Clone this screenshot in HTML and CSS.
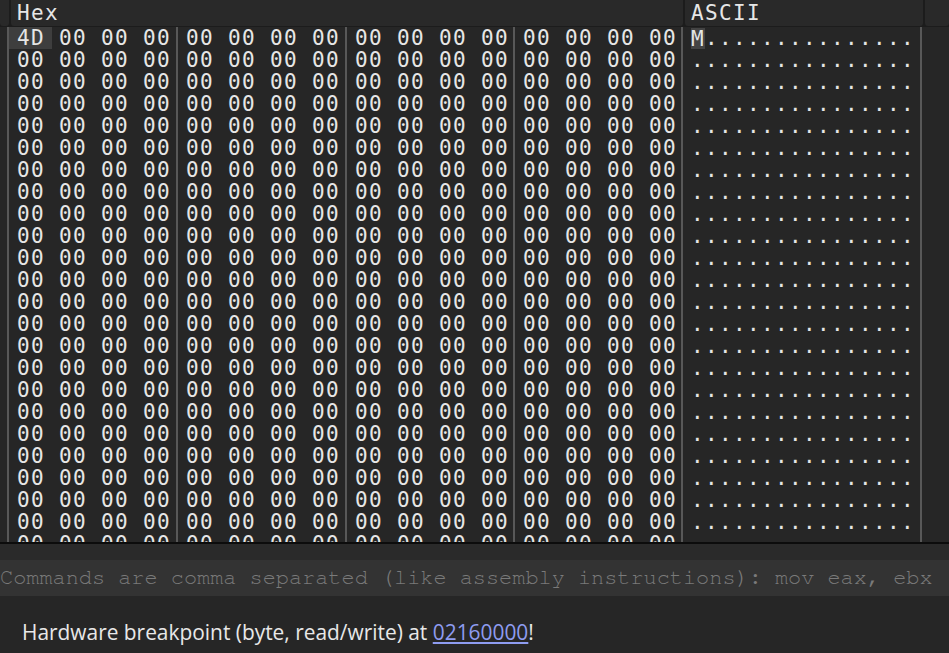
FILE: index.html
```html
<!DOCTYPE html>
<html>
<head>
<meta charset="utf-8">
<link rel="stylesheet" href="styles.css">
</head>
<body>
<div class="dump">
  <div class="head">
    <div class="hc hc-pad"></div>
    <div class="hc hc-hex">Hex</div>
    <div class="hc hc-asc">ASCII</div>
    <div class="hc hc-end"></div>
  </div>
  <div class="rows">
    <div class="row"><span class="g"><span class="sel">4D</span> 00 00 00</span><span class="g">00 00 00 00</span><span class="g">00 00 00 00</span><span class="g">00 00 00 00</span><span class="a"><span class="selc">M</span>...............</span></div>
    <div class="row"><span class="g">00 00 00 00</span><span class="g">00 00 00 00</span><span class="g">00 00 00 00</span><span class="g">00 00 00 00</span><span class="a">................</span></div>
    <div class="row"><span class="g">00 00 00 00</span><span class="g">00 00 00 00</span><span class="g">00 00 00 00</span><span class="g">00 00 00 00</span><span class="a">................</span></div>
    <div class="row"><span class="g">00 00 00 00</span><span class="g">00 00 00 00</span><span class="g">00 00 00 00</span><span class="g">00 00 00 00</span><span class="a">................</span></div>
    <div class="row"><span class="g">00 00 00 00</span><span class="g">00 00 00 00</span><span class="g">00 00 00 00</span><span class="g">00 00 00 00</span><span class="a">................</span></div>
    <div class="row"><span class="g">00 00 00 00</span><span class="g">00 00 00 00</span><span class="g">00 00 00 00</span><span class="g">00 00 00 00</span><span class="a">................</span></div>
    <div class="row"><span class="g">00 00 00 00</span><span class="g">00 00 00 00</span><span class="g">00 00 00 00</span><span class="g">00 00 00 00</span><span class="a">................</span></div>
    <div class="row"><span class="g">00 00 00 00</span><span class="g">00 00 00 00</span><span class="g">00 00 00 00</span><span class="g">00 00 00 00</span><span class="a">................</span></div>
    <div class="row"><span class="g">00 00 00 00</span><span class="g">00 00 00 00</span><span class="g">00 00 00 00</span><span class="g">00 00 00 00</span><span class="a">................</span></div>
    <div class="row"><span class="g">00 00 00 00</span><span class="g">00 00 00 00</span><span class="g">00 00 00 00</span><span class="g">00 00 00 00</span><span class="a">................</span></div>
    <div class="row"><span class="g">00 00 00 00</span><span class="g">00 00 00 00</span><span class="g">00 00 00 00</span><span class="g">00 00 00 00</span><span class="a">................</span></div>
    <div class="row"><span class="g">00 00 00 00</span><span class="g">00 00 00 00</span><span class="g">00 00 00 00</span><span class="g">00 00 00 00</span><span class="a">................</span></div>
    <div class="row"><span class="g">00 00 00 00</span><span class="g">00 00 00 00</span><span class="g">00 00 00 00</span><span class="g">00 00 00 00</span><span class="a">................</span></div>
    <div class="row"><span class="g">00 00 00 00</span><span class="g">00 00 00 00</span><span class="g">00 00 00 00</span><span class="g">00 00 00 00</span><span class="a">................</span></div>
    <div class="row"><span class="g">00 00 00 00</span><span class="g">00 00 00 00</span><span class="g">00 00 00 00</span><span class="g">00 00 00 00</span><span class="a">................</span></div>
    <div class="row"><span class="g">00 00 00 00</span><span class="g">00 00 00 00</span><span class="g">00 00 00 00</span><span class="g">00 00 00 00</span><span class="a">................</span></div>
    <div class="row"><span class="g">00 00 00 00</span><span class="g">00 00 00 00</span><span class="g">00 00 00 00</span><span class="g">00 00 00 00</span><span class="a">................</span></div>
    <div class="row"><span class="g">00 00 00 00</span><span class="g">00 00 00 00</span><span class="g">00 00 00 00</span><span class="g">00 00 00 00</span><span class="a">................</span></div>
    <div class="row"><span class="g">00 00 00 00</span><span class="g">00 00 00 00</span><span class="g">00 00 00 00</span><span class="g">00 00 00 00</span><span class="a">................</span></div>
    <div class="row"><span class="g">00 00 00 00</span><span class="g">00 00 00 00</span><span class="g">00 00 00 00</span><span class="g">00 00 00 00</span><span class="a">................</span></div>
    <div class="row"><span class="g">00 00 00 00</span><span class="g">00 00 00 00</span><span class="g">00 00 00 00</span><span class="g">00 00 00 00</span><span class="a">................</span></div>
    <div class="row"><span class="g">00 00 00 00</span><span class="g">00 00 00 00</span><span class="g">00 00 00 00</span><span class="g">00 00 00 00</span><span class="a">................</span></div>
    <div class="row"><span class="g">00 00 00 00</span><span class="g">00 00 00 00</span><span class="g">00 00 00 00</span><span class="g">00 00 00 00</span><span class="a">................</span></div>
    <div class="row"><span class="g">00 00 00 00</span><span class="g">00 00 00 00</span><span class="g">00 00 00 00</span><span class="g">00 00 00 00</span><span class="a">................</span></div>
  </div>
</div>
<div class="cmdbar">
  <input class="cmd" type="text" placeholder="Commands are comma separated (like assembly instructions): mov eax, ebx">
</div>
<div class="msg">Hardware breakpoint (byte, read/write) at <a class="addr" href="#">02160000</a>!</div>
</body>
</html>
```
FILE: styles.css
```css
html, body {
  margin: 0;
  padding: 0;
}
body {
  width: 949px;
  height: 653px;
  overflow: hidden;
  background: #262626;
  color: #e6e6e6;
}
.dump {
  height: 544px;
  box-sizing: border-box;
  border-bottom: 2px solid #0c0c0c;
  overflow: hidden;
  font-family: "DejaVu Sans Mono", monospace;
  font-size: 21px;
  letter-spacing: 1.36px;
}
.head {
  display: flex;
  gap: 2px;
  height: 27px;
  box-sizing: border-box;
  border-bottom: 1px solid #1c1c1c;
  background: #1c1c1c;
}
.hc {
  background: #292929;
  line-height: 26px;
  padding-left: 6px;
  color: #e6e6e6;
  border-radius: 0 0 3px 3px;
  box-sizing: border-box;
}
.hc-pad { width: 9px; padding: 0; }
.hc-hex { width: 672px; }
.hc-asc { width: 238px; }
.hc-end { flex: 1; padding: 0; }
.rows {
  padding-left: 7px;
}
.row {
  display: flex;
  height: 22px;
  line-height: 22px;
  white-space: pre;
}
.g {
  width: 168px;
  box-sizing: border-box;
  border-left: 2px solid #585858;
  padding-left: 8px;
}
.g:nth-child(-n+2) { width: 169px; }
.a {
  width: 241px;
  box-sizing: border-box;
  border-left: 2px solid #585858;
  border-right: 2px solid #585858;
  padding-left: 8px;
}
.sel {
  display: inline-block;
  background: #3e3e3e;
  padding: 0 7px 0 8px;
  margin: 0 -7px 0 -8px;
}
.selc {
  display: inline-block;
  background: #444444;
  height: 21px;
  vertical-align: top;
  margin-top: 1px;
}
.cmdbar {
  padding-top: 16px;
  background: #2a2a2a;
}
.cmd {
  display: block;
  width: 100%;
  height: 36px;
  box-sizing: border-box;
  margin: 0;
  padding: 0 0 2px 0;
  border: 0;
  outline: none;
  background: #333333;
  color: #d0d0d0;
  font-family: "Nimbus Mono PS", "Nimbus Mono L", "FreeMono", "Courier New", "Liberation Mono", monospace;
  font-size: 21.9px;
}
.cmd::placeholder {
  color: #7a7a7a;
}
.msg {
  padding: 22px 0 0 22px;
  font-family: "Open Sans", sans-serif;
  font-size: 20.9px;
  line-height: 28px;
  color: #e8e8e8;
}
.addr {
  color: #8e9cf0;
  text-decoration: underline;
}
```
